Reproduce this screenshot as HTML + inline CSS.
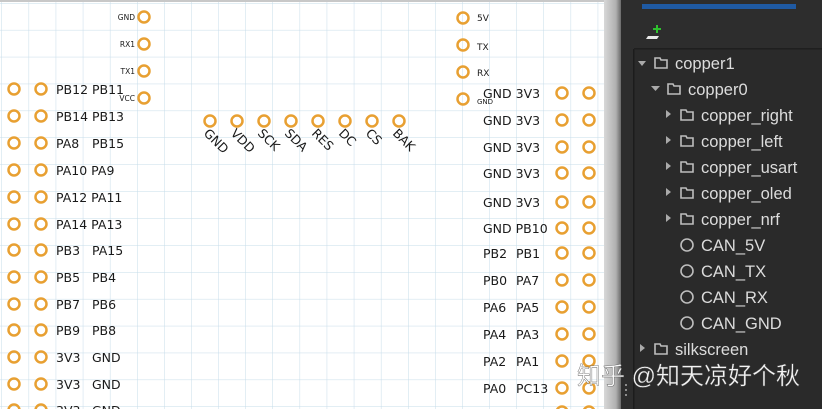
<!DOCTYPE html>
<html><head><meta charset="utf-8"><style>
html,body{margin:0;padding:0;width:822px;height:409px;overflow:hidden;background:#2b2b2b}
svg{display:block}
</style></head><body>
<svg width="822" height="409" xmlns="http://www.w3.org/2000/svg" font-family="DejaVu Sans, sans-serif">
<defs>
<linearGradient id="sh" x1="0" x2="1"><stop offset="0" stop-color="#d8d8d8"/><stop offset="0.7" stop-color="#b0b0b0"/><stop offset="1" stop-color="#6a6a6a"/></linearGradient>
<pattern id="grid" x="1.5" y="3" width="27.1" height="26.9" patternUnits="userSpaceOnUse">
<path d="M0 0V27M0 0H28" stroke="#c6dcea" stroke-width="1" fill="none"/>
</pattern>
</defs>
<rect x="0" y="0" width="604" height="409" fill="#fff"/>
<rect x="0" y="0" width="604" height="409" fill="url(#grid)"/>
<rect x="0" y="0" width="604" height="2" fill="#c8c8c8"/>
<rect x="604" y="0" width="17" height="409" fill="url(#sh)"/>
<rect x="621" y="0" width="201" height="409" fill="#2d2d2d"/>
<rect x="634" y="49" width="188" height="360" fill="#2a2a2a"/>
<rect x="633" y="49" width="1.5" height="360" fill="#1c1c1c"/>
<rect x="634" y="48" width="188" height="1.5" fill="#1f1f1f"/>
<rect x="642" y="4" width="154" height="5" fill="#1f5aa3"/>
<path d="M653 29h8M657 25v8" stroke="#2ec12e" stroke-width="2"/>
<path d="M648 36h11l-2 3h-11z" fill="#e8e8e8"/>
<circle cx="626" cy="385" r="1" fill="#aaa"/><circle cx="626" cy="390" r="1" fill="#aaa"/><circle cx="626" cy="395" r="1" fill="#aaa"/>

<g fill="none" stroke="#e8a032" stroke-width="2.5">
<circle cx="14" cy="89" r="5.5"/><circle cx="41" cy="89" r="5.5"/>
<circle cx="14" cy="116" r="5.5"/><circle cx="41" cy="116" r="5.5"/>
<circle cx="14" cy="143" r="5.5"/><circle cx="41" cy="143" r="5.5"/>
<circle cx="14" cy="170" r="5.5"/><circle cx="41" cy="170" r="5.5"/>
<circle cx="14" cy="197" r="5.5"/><circle cx="41" cy="197" r="5.5"/>
<circle cx="14" cy="224" r="5.5"/><circle cx="41" cy="224" r="5.5"/>
<circle cx="14" cy="250" r="5.5"/><circle cx="41" cy="250" r="5.5"/>
<circle cx="14" cy="277" r="5.5"/><circle cx="41" cy="277" r="5.5"/>
<circle cx="14" cy="304" r="5.5"/><circle cx="41" cy="304" r="5.5"/>
<circle cx="14" cy="330" r="5.5"/><circle cx="41" cy="330" r="5.5"/>
<circle cx="14" cy="357" r="5.5"/><circle cx="41" cy="357" r="5.5"/>
<circle cx="14" cy="384" r="5.5"/><circle cx="41" cy="384" r="5.5"/>
<circle cx="14" cy="410" r="5.5"/><circle cx="41" cy="410" r="5.5"/>
<circle cx="562" cy="93" r="5.5"/><circle cx="589" cy="93" r="5.5"/>
<circle cx="562" cy="120" r="5.5"/><circle cx="589" cy="120" r="5.5"/>
<circle cx="562" cy="147" r="5.5"/><circle cx="589" cy="147" r="5.5"/>
<circle cx="562" cy="173" r="5.5"/><circle cx="589" cy="173" r="5.5"/>
<circle cx="562" cy="202" r="5.5"/><circle cx="589" cy="202" r="5.5"/>
<circle cx="562" cy="228" r="5.5"/><circle cx="589" cy="228" r="5.5"/>
<circle cx="562" cy="253" r="5.5"/><circle cx="589" cy="253" r="5.5"/>
<circle cx="562" cy="280" r="5.5"/><circle cx="589" cy="280" r="5.5"/>
<circle cx="562" cy="307" r="5.5"/><circle cx="589" cy="307" r="5.5"/>
<circle cx="562" cy="334" r="5.5"/><circle cx="589" cy="334" r="5.5"/>
<circle cx="562" cy="361" r="5.5"/><circle cx="589" cy="361" r="5.5"/>
<circle cx="562" cy="388" r="5.5"/><circle cx="589" cy="388" r="5.5"/>
<circle cx="562" cy="412" r="5.5"/><circle cx="589" cy="412" r="5.5"/>
<circle cx="144" cy="17" r="5.5"/><circle cx="144" cy="44" r="5.5"/><circle cx="144" cy="71" r="5.5"/><circle cx="144" cy="98" r="5.5"/>
<circle cx="463" cy="18" r="5.5"/><circle cx="463" cy="45" r="5.5"/><circle cx="463" cy="72" r="5.5"/><circle cx="463" cy="99" r="5.5"/>
<circle cx="210" cy="121" r="5.5"/><circle cx="237" cy="121" r="5.5"/><circle cx="264" cy="121" r="5.5"/><circle cx="291" cy="121" r="5.5"/>
<circle cx="318" cy="121" r="5.5"/><circle cx="345" cy="121" r="5.5"/><circle cx="372" cy="121" r="5.5"/><circle cx="399" cy="121" r="5.5"/>
</g>

<g fill="#1a1a1a" font-size="12.5">
<text x="56" y="94">PB12 PB11</text>
<text x="56" y="121">PB14 PB13</text>
<text x="56" y="148">PA8</text><text x="92" y="148">PB15</text>
<text x="56" y="175">PA10 PA9</text>
<text x="56" y="202">PA12 PA11</text>
<text x="56" y="229">PA14 PA13</text>
<text x="56" y="255">PB3</text><text x="92" y="255">PA15</text>
<text x="56" y="282">PB5</text><text x="92" y="282">PB4</text>
<text x="56" y="309">PB7</text><text x="92" y="309">PB6</text>
<text x="56" y="335">PB9</text><text x="92" y="335">PB8</text>
<text x="56" y="362">3V3</text><text x="92" y="362">GND</text>
<text x="56" y="389">3V3</text><text x="92" y="389">GND</text>
<text x="56" y="415">3V3</text><text x="92" y="415">GND</text>
<text x="483" y="98">GND 3V3</text>
<text x="483" y="125">GND 3V3</text>
<text x="483" y="152">GND 3V3</text>
<text x="483" y="178">GND 3V3</text>
<text x="483" y="207">GND 3V3</text>
<text x="483" y="233">GND PB10</text>
<text x="483" y="258">PB2</text><text x="516" y="258">PB1</text>
<text x="483" y="285">PB0</text><text x="516" y="285">PA7</text>
<text x="483" y="312">PA6</text><text x="516" y="312">PA5</text>
<text x="483" y="339">PA4</text><text x="516" y="339">PA3</text>
<text x="483" y="366">PA2</text><text x="516" y="366">PA1</text>
<text x="483" y="393">PA0</text><text x="516" y="393">PC13</text>
</g>
<g fill="#1a1a1a" font-size="7.5" text-anchor="end">
<text x="135" y="20">GND</text><text x="135" y="47">RX1</text><text x="135" y="74">TX1</text><text x="135" y="101">VCC</text>
</g>
<g fill="#1a1a1a" font-size="9">
<text x="477" y="21">5V</text><text x="477" y="50">TX</text><text x="477" y="76">RX</text><text x="477" y="104" font-size="7">GND</text>
</g>
<g fill="#1a1a1a" font-size="12.5">
<text transform="translate(203,134) rotate(45)">GND</text>
<text transform="translate(230,134) rotate(45)">VDD</text>
<text transform="translate(257,134) rotate(45)">SCK</text>
<text transform="translate(284,134) rotate(45)">SDA</text>
<text transform="translate(311,134) rotate(45)">RES</text>
<text transform="translate(338,134) rotate(45)">DC</text>
<text transform="translate(365,134) rotate(45)">CS</text>
<text transform="translate(392,134) rotate(45)">BAK</text>
</g>

<g font-family="Liberation Sans, DejaVu Sans, sans-serif" font-size="16.5" fill="#dcdcdc">
<path d="M638 61h8l-4 5z" fill="#aaa"/>
<path d="M651 68h9l-4.5 5z" fill="#aaa" transform="translate(0,18)"/>
<g fill="#aaa">
<path d="M666 110l5 4-5 4z"/><path d="M666 136l5 4-5 4z"/><path d="M666 162l5 4-5 4z"/><path d="M666 188l5 4-5 4z"/><path d="M666 214l5 4-5 4z"/>
<path d="M640 344l5 4-5 4z"/>
</g>
<g fill="none" stroke="#bdbdbd" stroke-width="1.6">
<path d="M655 58h5l1 2h6v8h-12z"/>
<path d="M668 84h5l1 2h6v8h-12z"/>
<path d="M681 110h5l1 2h6v8h-12z"/>
<path d="M681 136h5l1 2h6v8h-12z"/>
<path d="M681 162h5l1 2h6v8h-12z"/>
<path d="M681 188h5l1 2h6v8h-12z"/>
<path d="M681 214h5l1 2h6v8h-12z"/>
<path d="M655 344h5l1 2h6v8h-12z"/>
<circle cx="687" cy="245" r="6"/><circle cx="687" cy="271" r="6"/><circle cx="687" cy="297" r="6"/><circle cx="687" cy="323" r="6"/>
</g>
<text x="675" y="69">copper1</text>
<text x="688" y="95">copper0</text>
<text x="701" y="121">copper_right</text>
<text x="701" y="147">copper_left</text>
<text x="701" y="173">copper_usart</text>
<text x="701" y="199">copper_oled</text>
<text x="701" y="225">copper_nrf</text>
<text x="701" y="251">CAN_5V</text>
<text x="701" y="277">CAN_TX</text>
<text x="701" y="303">CAN_RX</text>
<text x="701" y="329">CAN_GND</text>
<text x="675" y="355">silkscreen</text>
</g>
<text x="577" y="384" font-family="Liberation Sans, Noto Sans CJK SC, sans-serif" font-size="24" fill="#fff" stroke="#555" stroke-width="0.4" opacity="0.95">知乎 @知天凉好个秋</text>
</svg>
</body></html>
